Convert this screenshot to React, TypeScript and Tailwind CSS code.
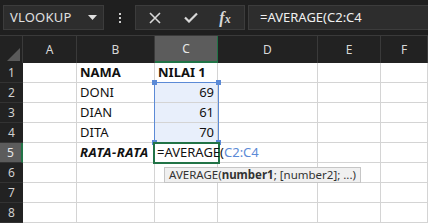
import React from "react";

const cols = [
  { k: "A", w: 54 },
  { k: "B", w: 78 },
  { k: "C", w: 63 },
  { k: "D", w: 100 },
  { k: "E", w: 63 },
  { k: "F", w: 0 },
];

type Cell = { t?: React.ReactNode; cls?: string };

const rows: Record<number, Record<string, Cell>> = {
  1: { B: { t: "NAMA", cls: "font-bold" }, C: { t: "NILAI 1", cls: "font-bold" } },
  2: { B: { t: "DONI" }, C: { t: "69", cls: "justify-end" } },
  3: { B: { t: "DIAN" }, C: { t: "61", cls: "justify-end" } },
  4: { B: { t: "DITA" }, C: { t: "70", cls: "justify-end" } },
  5: { B: { t: "RATA-RATA", cls: "font-bold italic tracking-[0.5px]" } },
};

export default function App() {
  return (
    <div
      className="w-[428px] h-[223px] overflow-hidden bg-white flex flex-col"
      style={{ fontFamily: '"Noto Sans", "Open Sans", sans-serif' }}
    >
      {/* top bar */}
      <div className="h-[36px] bg-[#1f1f1f] border-b border-[#3a3a3a] flex items-center pl-[3px] gap-0 shrink-0">
        <div className="w-[101px] h-[25px] bg-[#2d2d2d] border border-[#3c3c3c] flex items-center justify-between pl-[6px] pr-[6px]">
          <span className="text-[13px] text-[#e0e0e0] tracking-[0.2px]">VLOOKUP</span>
          <svg width="9" height="5" viewBox="0 0 9 5">
            <path d="M0 0 L9 0 L4.5 5 Z" fill="#e0e0e0" />
          </svg>
        </div>
        <div className="w-[31px] flex justify-center">
          <div className="flex flex-col gap-[2px]">
            <div className="w-[2px] h-[2px] bg-[#d0d0d0]" />
            <div className="w-[2px] h-[2px] bg-[#d0d0d0]" />
            <div className="w-[2px] h-[2px] bg-[#d0d0d0]" />
          </div>
        </div>
        <div className="w-[110px] h-[25px] bg-[#2d2d2d] border border-[#3c3c3c] flex items-center">
          <div className="w-[38px] flex justify-center">
            <svg width="12" height="12" viewBox="0 0 12 12">
              <path d="M1 1 L11 11 M11 1 L1 11" stroke="#d8d8d8" strokeWidth="1.6" />
            </svg>
          </div>
          <div className="w-[34px] flex justify-center">
            <svg width="14" height="11" viewBox="0 0 14 11">
              <path d="M1 5.5 L5 9.5 L13 1.5" stroke="#d8d8d8" strokeWidth="2.2" fill="none" />
            </svg>
          </div>
          <div className="w-[34px] flex justify-center">
            <span
              className="italic font-bold text-[#d8d8d8] text-[16px] leading-none"
              style={{ fontFamily: '"Liberation Serif", serif' }}
            >
              f<span className="text-[12px]">x</span>
            </span>
          </div>
        </div>
        <div className="ml-[3px] flex-1 h-[25px] bg-[#2d2d2d] border border-[#3c3c3c] border-r-0 flex items-center pl-[11px]">
          <span className="text-[13px] text-[#f0f0f0]">=AVERAGE(C2:C4</span>
        </div>
      </div>

      {/* column headers */}
      <div className="h-[27px] bg-[#222222] flex shrink-0">
        <div className="w-[23px] h-full border-r border-[#3a3a3a] relative">
          <svg className="absolute right-[2px] bottom-[2px]" width="13" height="13" viewBox="0 0 13 13">
            <path d="M13 0 L13 13 L0 13 Z" fill="#5a5a5a" />
          </svg>
        </div>
        {cols.map((c) => (
          <div
            key={c.k}
            className={
              (c.k === "F" ? "flex-1 " : "") +
              (c.k === "C"
                ? "bg-[#5c5c5c] border-b-2 border-[#217346] text-[#e8e8e8] "
                : "text-[#d8d8d8] ") +
              "h-full border-r border-[#3a3a3a] flex items-center justify-center text-[12px]"
            }
            style={c.w ? { width: c.w } : undefined}
          >
            {c.k}
          </div>
        ))}
      </div>

      {/* grid */}
      <div className="relative flex-1">
        {[1, 2, 3, 4, 5, 6, 7, 8].map((r) => (
          <div key={r} className="h-[20px] flex">
            <div
              className={
                "w-[23px] h-full flex items-center justify-center text-[12px] border-b border-[#333333] " +
                (r === 5
                  ? "bg-[#5c5c5c] text-[#e8e8e8] border-r-2 border-r-[#217346]"
                  : "bg-[#222222] text-[#d0d0d0]")
              }
            >
              {r}
            </div>
            {cols.map((c) => {
              const cell = rows[r]?.[c.k];
              const sel = c.k === "C" && r >= 2 && r <= 4;
              return (
                <div
                  key={c.k}
                  className={
                    (c.k === "F" ? "flex-1 " : "") +
                    (sel ? "bg-[#e8effb] " : "") +
                    "h-full border-r border-b border-[#d4d4d4] flex items-center px-[3px] text-[13px] text-[#111] whitespace-nowrap " +
                    (cell?.cls ?? "")
                  }
                  style={c.w ? { width: c.w } : undefined}
                >
                  {cell?.t}
                </div>
              );
            })}
          </div>
        ))}

        {/* selection C2:C4 */}
        <div className="absolute left-[154px] top-[19px] w-[65px] h-[61px] border border-[#5b8ad6] pointer-events-none" />
        {[
          "left-[152px] top-[17px]",
          "left-[216px] top-[17px]",
          "left-[152px] top-[77px]",
          "left-[216px] top-[77px]",
        ].map((p) => (
          <div key={p} className={"absolute w-[5px] h-[5px] bg-[#5b8ad6] " + p} />
        ))}

        {/* active cell C5 in edit mode */}
        <div className="absolute left-[153px] top-[79px] w-[67px] h-[22px] border-2 border-[#217346] bg-white flex items-center pl-[2px] whitespace-nowrap overflow-visible">
          <span className="text-[13px] text-[#111]">
            =AVERAGE(<span className="text-[#5b8ad6]">C2:C4</span>
          </span>
        </div>

        {/* tooltip */}
        <div className="absolute left-[164px] top-[104px] h-[16px] px-[4px] bg-[#f0f0f0] border border-[#c6c6c6] flex items-center whitespace-nowrap">
          <span className="text-[11.5px] text-[#333] leading-none">
            AVERAGE(<span className="font-bold">number1</span>; [number2]; ...)
          </span>
        </div>
      </div>
    </div>
  );
}
